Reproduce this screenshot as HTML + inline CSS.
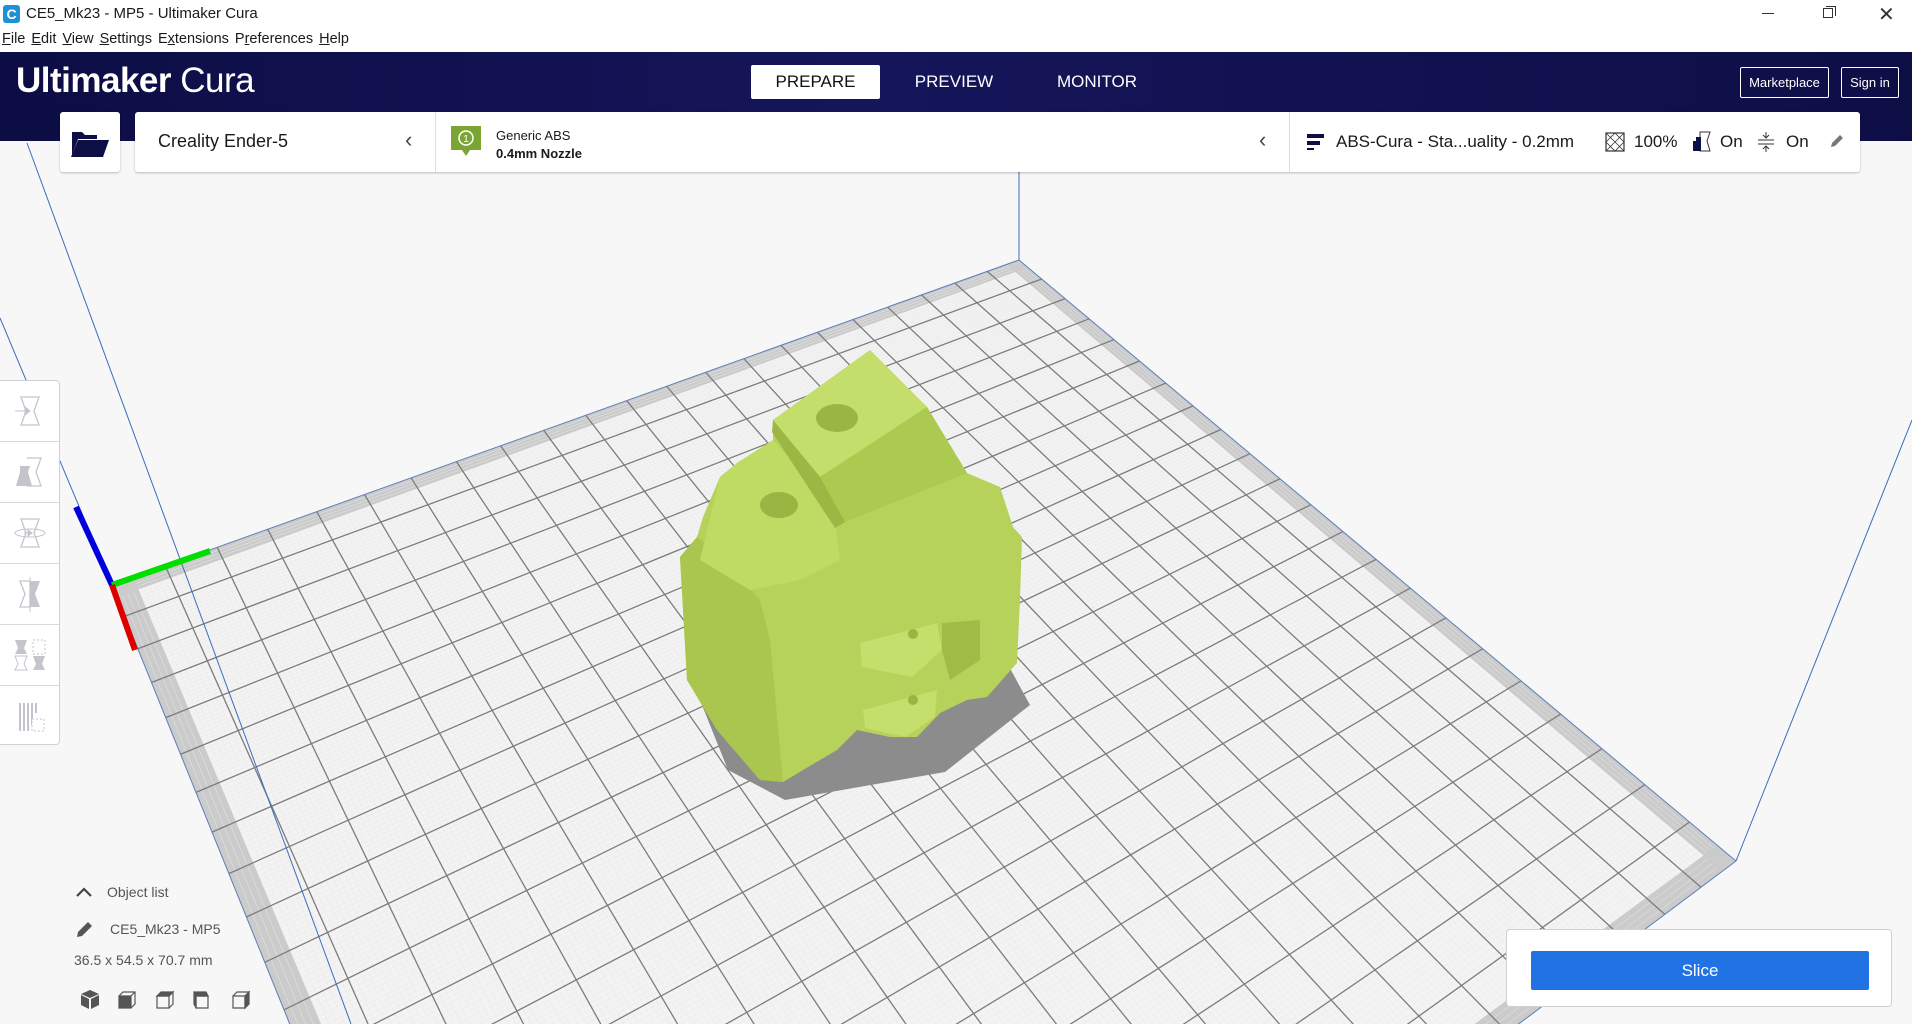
<!DOCTYPE html>
<html><head><meta charset="utf-8">
<style>
*{margin:0;padding:0;box-sizing:border-box}
html,body{width:1912px;height:1024px;overflow:hidden;background:#f7f7f7;font-family:"Liberation Sans",sans-serif;color:#1a1a1a}
#vp{position:absolute;left:0;top:0;display:block}
.abs{position:absolute}
#title{left:0;top:0;width:1912px;height:28px;background:#fff}
#menu{left:0;top:28px;width:1912px;height:24px;background:#fff;font-size:14.5px}
#menu span{margin-right:6px;text-decoration:none}
#menu u{text-decoration:underline}
#hdr{left:0;top:52px;width:1912px;height:89px;background:linear-gradient(90deg,#0d0d45 0%,#15155a 45%,#0e0e47 100%)}
.card{background:#fff;box-shadow:0 1px 2px rgba(0,0,0,.25);border-radius:3px}
.tb{left:0;top:380px;width:60px;height:365px;background:#fff;border:1px solid #d0d0d6;border-left:none;border-radius:0 4px 4px 0}
.tb div{height:61px;border-bottom:1px solid #d8d8de;display:flex;align-items:center;justify-content:center}
.tb div:last-child{border-bottom:none}
</style></head><body>
<svg id="vp" width="1912" height="1024" xmlns="http://www.w3.org/2000/svg"></svg>

<div id="title" class="abs">
  <div class="abs" style="left:3px;top:5px;width:17px;height:18px;background:#1e90d8;border-radius:3px;color:#fff;font-weight:bold;font-size:14px;line-height:18px;text-align:center">C</div>
  <div class="abs" style="left:26px;top:5px;font-size:15px">CE5_Mk23 - MP5 - Ultimaker Cura</div>
  <div class="abs" style="left:1762px;top:13px;width:12px;height:1px;background:#333"></div>
  <div class="abs" style="left:1823px;top:8px;width:10px;height:10px;border:1px solid #333"></div>
  <div class="abs" style="left:1826px;top:6px;width:10px;height:10px;border-top:1px solid #333;border-right:1px solid #333"></div>
  <div class="abs" style="left:1878px;top:2px;font-size:20px;color:#333">✕</div>
</div>
<div id="menu" class="abs"><div style="position:absolute;left:2px;top:3px"><span><u>F</u>ile</span><span><u>E</u>dit</span><span><u>V</u>iew</span><span><u>S</u>ettings</span><span>E<u>x</u>tensions</span><span>P<u>r</u>eferences</span><span><u>H</u>elp</span></div></div>

<div id="hdr" class="abs">
  <div class="abs" style="left:16px;top:9px;color:#fff;font-size:35px;letter-spacing:-0.5px"><b>Ultimaker</b> <span style="font-weight:normal">Cura</span></div>
  <div class="abs" style="left:751px;top:13px;width:129px;height:34px;background:#fff;border-radius:2px;color:#111;font-size:17px;text-align:center;line-height:34px">PREPARE</div>
  <div class="abs" style="left:904px;top:13px;width:100px;color:#fff;font-size:17px;text-align:center;line-height:34px">PREVIEW</div>
  <div class="abs" style="left:1047px;top:13px;width:100px;color:#fff;font-size:17px;text-align:center;line-height:34px">MONITOR</div>
  <div class="abs" style="left:1740px;top:15px;width:89px;height:31px;border:1px solid #fff;border-radius:2px;color:#fff;font-size:13px;text-align:center;line-height:29px">Marketplace</div>
  <div class="abs" style="left:1841px;top:15px;width:58px;height:31px;border:1px solid #fff;border-radius:2px;color:#fff;font-size:13px;text-align:center;line-height:29px">Sign in</div>
</div>

<div class="abs card" style="left:60px;top:112px;width:60px;height:60px">
  <svg width="60" height="60"><path d="M12 20h10l3 3h12v4H18l-6 16z" fill="#0e0e46"/><path d="M18 28h31l-6 17H11z" fill="#0e0e46"/></svg>
</div>
<div class="abs card" style="left:135px;top:112px;width:1725px;height:60px">
  <div class="abs" style="left:23px;top:19px;font-size:18px">Creality Ender-5</div>
  <div class="abs" style="left:270px;top:15px;font-size:22px;color:#444">‹</div>
  <div class="abs" style="left:300px;top:0;width:1px;height:60px;background:#ddd"></div>
  <svg class="abs" style="left:316px;top:14px" width="30" height="34"><path d="M0 0h30v24H19l-4 6-4-6H0z" fill="#7aa532"/><circle cx="15" cy="12" r="7" fill="none" stroke="#fff" stroke-width="1.5"/><text x="15" y="16" font-size="10" fill="#fff" text-anchor="middle" font-family="Liberation Sans">1</text></svg>
  <div class="abs" style="left:361px;top:16px;font-size:13px">Generic ABS</div>
  <div class="abs" style="left:361px;top:34px;font-size:13px;font-weight:bold">0.4mm Nozzle</div>
  <div class="abs" style="left:1124px;top:15px;font-size:22px;color:#444">‹</div>
  <div class="abs" style="left:1154px;top:0;width:1px;height:60px;background:#ddd"></div>
  <svg class="abs" style="left:1172px;top:21px" width="20" height="20"><rect x="0" y="1" width="17" height="4" fill="#0e0e46"/><rect x="0" y="8" width="13" height="4" fill="#0e0e46"/><rect x="0" y="15" width="7" height="2" fill="#0e0e46"/></svg>
  <div class="abs" style="left:1201px;top:20px;font-size:17px">ABS-Cura - Sta...uality - 0.2mm</div>
  <svg class="abs" style="left:1470px;top:20px" width="20" height="20"><rect x="1" y="1" width="18" height="18" fill="none" stroke="#333" stroke-width="1.2"/><path d="M1 10L10 1 19 10 10 19z M1 1l18 18 M19 1L1 19" fill="none" stroke="#333" stroke-width=".8"/></svg>
  <div class="abs" style="left:1499px;top:20px;font-size:17px">100%</div>
  <svg class="abs" style="left:1557px;top:19px" width="20" height="22"><path d="M8 1h10l-3 9 3 10H8z" fill="none" stroke="#333" stroke-width="1"/><path d="M1 10h8v10H1z M4 6h5v4H4z" fill="#0e0e46"/></svg>
  <div class="abs" style="left:1585px;top:20px;font-size:17px">On</div>
  <svg class="abs" style="left:1622px;top:19px" width="18" height="22"><path d="M1 9h16M1 13h16" stroke="#333" stroke-width="1"/><path d="M9 1v6M6 4l3 3 3-3M9 21v-6M6 18l3-3 3 3" fill="none" stroke="#333" stroke-width="1"/></svg>
  <div class="abs" style="left:1651px;top:20px;font-size:17px">On</div>
  <svg class="abs" style="left:1694px;top:21px" width="16" height="16"><path d="M2 14l1-4 8-8 3 3-8 8z" fill="#777"/></svg>
</div>

<div class="abs tb">
  <div><svg width="40" height="40"><path d="M11 6h18l-5 14 5 14H11l5-14z" fill="none" stroke="#c4c4cc" stroke-width="1.3"/><path d="M5 20h14M15 16l5 4-5 4z" stroke="#c4c4cc" fill="#c4c4cc"/></svg></div>
  <div><svg width="40" height="40"><path d="M17 6h14l-5 14 5 14H17" fill="none" stroke="#c4c4cc" stroke-width="1.3"/><path d="M10 14h10l-2 6 4 14H6l4-14z" fill="#c4c4cc"/></svg></div>
  <div><svg width="40" height="40"><path d="M11 6h18l-5 14 5 14H11l5-14z" fill="none" stroke="#c4c4cc" stroke-width="1.3"/><ellipse cx="20" cy="20" rx="15" ry="4" fill="none" stroke="#c4c4cc"/><path d="M14 20h6M18 17l4 3-4 3z" stroke="#c4c4cc" fill="#c4c4cc"/></svg></div>
  <div><svg width="40" height="40"><path d="M10 7h10v26H10l5-13z" fill="none" stroke="#c4c4cc" stroke-width="1.3"/><path d="M20 7h10l-5 13 5 13H20z" fill="#c4c4cc"/><path d="M20 3v35" stroke="#c4c4cc"/></svg></div>
  <div><svg width="40" height="40"><path d="M5 5h12l-3 8 3 6H5l3-6z" fill="#c4c4cc"/><path d="M23 5h12v14H23z" fill="none" stroke="#c4c4cc" stroke-dasharray="2 2"/><path d="M5 21h12l-3 8 3 6H5l3-6z" fill="none" stroke="#c4c4cc"/><path d="M23 21h12l-3 8 3 6H23l3-6z" fill="#c4c4cc"/></svg></div>
  <div><svg width="40" height="40"><path d="M10 6v28M14 6v28M18 6v28M22 6v22M26 6v10" stroke="#c4c4cc" stroke-width="2"/><rect x="22" y="22" width="12" height="12" fill="#fff" stroke="#c4c4cc" stroke-dasharray="2 2"/></svg></div>
</div>

<svg class="abs" style="left:74px;top:884px" width="20" height="16"><path d="M3 12l7-7 7 7" fill="none" stroke="#444" stroke-width="2.2"/></svg>
<div class="abs" style="left:107px;top:884px;font-size:14px;color:#555">Object list</div>
<svg class="abs" style="left:75px;top:919px" width="20" height="20"><path d="M2 18l1-5 10-10 4 4-10 10z" fill="#555"/></svg>
<div class="abs" style="left:110px;top:921px;font-size:14px;color:#555">CE5_Mk23 - MP5</div>
<div class="abs" style="left:74px;top:952px;font-size:14px;color:#555">36.5 x 54.5 x 70.7 mm</div>
<svg class="abs" style="left:78px;top:988px" width="180" height="24">
 <g fill="#555" stroke="#555" stroke-width="1.2">
  <path d="M3 6l9-4 9 4-9 4z M3 7l8 4v10l-8-4z M21 7l-8 4v10l8-4z" stroke="none"/>
  <path d="M41 8h12v12H41z"/><path d="M41 8l4-4h12v12l-4 4M53 8l4-4" fill="none"/>
  <path d="M79 8h12v12H79z" fill="none"/><path d="M79 8l4-4h12l-4 4z"/><path d="M91 8l4-4v12l-4 4" fill="none"/>
  <path d="M118 8h12v12h-12z" fill="none"/><path d="M118 8l-2-4h12l2 4zM116 4v12l2 4V8z"/>
  <path d="M155 8h12v12h-12z" fill="none"/><path d="M155 8l4-4h12l-4 4" fill="none"/><path d="M167 8l4-4v12l-4 4z"/>
 </g>
</svg>

<div class="abs" style="left:1506px;top:929px;width:386px;height:78px;background:#fff;border:1px solid #d0d0d0;border-radius:4px">
  <div class="abs" style="left:24px;top:21px;width:338px;height:39px;background:#2172e2;border-radius:2px;color:#fff;font-size:17px;text-align:center;line-height:39px">Slice</div>
</div>

<script>
(function(){
var NS="http://www.w3.org/2000/svg",svg=document.getElementById('vp');
var P=[[112,585],[1019,260],[1736,861],[576,1731]];
var x0=P[0][0],y0=P[0][1],x1=P[1][0],y1=P[1][1],x2=P[2][0],y2=P[2][1],x3=P[3][0],y3=P[3][1];
var dx1=x1-x2,dx2=x3-x2,dx3=x0-x1+x2-x3,dy1=y1-y2,dy2=y3-y2,dy3=y0-y1+y2-y3;
var den=dx1*dy2-dx2*dy1,g=(dx3*dy2-dx2*dy3)/den,h=(dx1*dy3-dx3*dy1)/den;
var a=x1-x0+g*x1,b=x3-x0+h*x3,c=x0,d=y1-y0+g*y1,e=y3-y0+h*y3,f=y0;
function M(u,v){var w=g*u+h*v+1;return [(a*u+b*v+c)/w,(d*u+e*v+f)/w];}
function el(t,at){var n=document.createElementNS(NS,t);for(var k in at)n.setAttribute(k,at[k]);svg.appendChild(n);return n;}
function quad(u0,v0,u1,v1,fill){var p=[M(u0,v0),M(u1,v0),M(u1,v1),M(u0,v1)];el('polygon',{points:p.map(function(q){return q.join(',')}).join(' '),fill:fill});}
function line(p,q,s,w){el('line',{x1:p[0],y1:p[1],x2:q[0],y2:q[1],stroke:s,'stroke-width':w});}
quad(0,0,1,1,'#cbcbcb');
var m=4/220;quad(m,m,1-m,1-m,'#f3f3f3');
var i,t;
for(i=1;i<220;i++){if(i%10==0)continue;t=i/220;line(M(t,m),M(t,1-m),'#e9e9e9',0.5);line(M(m,t),M(1-m,t),'#e9e9e9',0.5);}
for(i=1;i<22;i++){t=i/22;line(M(t,0),M(t,1),'#7c7c7c',1.3);line(M(0,t),M(1,t),'#7c7c7c',1.3);}
var cs=[M(0,0),M(1,0),M(1,1),M(0,1)];
for(i=0;i<4;i++)line(cs[i],cs[(i+1)%4],'#5a7fb8',1);
line([1019,260],[1019,172],'#3a6fb8',1);
line([1736,861],[1912,420],'#3a6fb8',1);
line([112,585],[0,318],'#3a6fb8',1);
line([27,143],[351,1024],'#3a6fb8',1);
line([112,585],[76,507],'#0000dd',6);
line([112,585],[210,551],'#00dd00',6);
line([112,585],[135,650],'#dd0000',6);
function poly(pts,fill){el('polygon',{points:pts,fill:fill});}
poly('700,700 1000,650 1030,705 945,772 785,800 728,770','#8c8c8c');
poly('870,350 927,407 967,473 1000,487 1013,527 1022,537 1020,600 1017,663 987,697 967,700 940,713 917,737 890,737 857,730 837,750 803,770 783,782 760,780 717,730 687,680 680,557 697,537 703,517 720,477 737,463 773,440 773,420','#b6d25a');
poly('680,557 697,537 718,552 760,600 770,640 783,782 760,780 717,730 687,680','#aac64e');
poly('700,560 720,477 737,463 773,440 800,470 835,520 840,560 800,580 750,590','#bedb63');
poly('773,420 870,350 927,407 820,477','#c3de6b');
poly('820,477 927,407 967,473 845,522','#accA50');
poly('773,420 820,477 845,522 835,528 772,432','#9cb744');
el('ellipse',{cx:837,cy:418,rx:21,ry:14,fill:'#9ab542'});
el('ellipse',{cx:779,cy:505,rx:19,ry:13,fill:'#9ab542'});
poly('860,643 937,623 942,650 912,677 862,667','#c4df6c');
poly('863,710 937,690 935,717 905,737 865,728','#c4df6c');
poly('942,623 980,620 980,660 950,680 942,650','#a0bb46');
el('circle',{cx:913,cy:634,r:5,fill:'#9ab542'});
el('circle',{cx:913,cy:700,r:5,fill:'#9ab542'});
})();
</script>
</body></html>
